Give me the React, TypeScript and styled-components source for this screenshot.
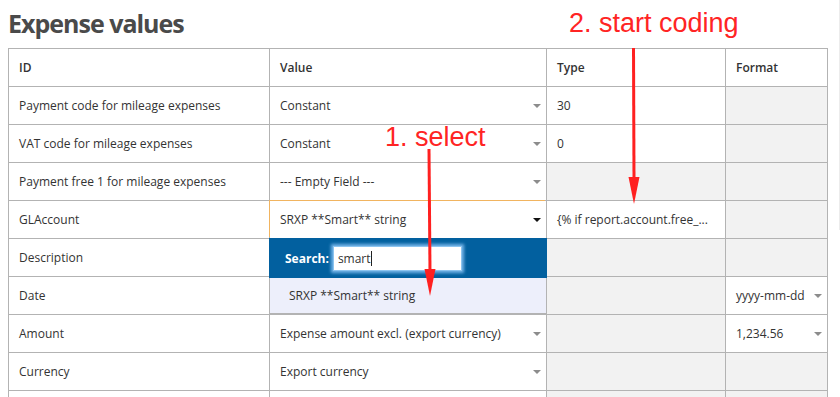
import React from 'react';
import styled, { createGlobalStyle } from 'styled-components';

const GlobalStyle = createGlobalStyle`
  html, body { margin: 0; padding: 0; background: #fff; }
  body { font-family: "Open Sans", "Liberation Sans", sans-serif; color: #333; overflow: hidden; }
`;

const Page = styled.div`
  position: relative;
  width: 840px;
  height: 397px;
  padding: 3px 0 0 8px;
  box-sizing: border-box;
  overflow: hidden;
  &::after {
    content: '';
    position: absolute;
    right: 0;
    top: 0;
    width: 1px;
    height: 230px;
    background: #ececec;
  }
`;

const Title = styled.h2`
  margin: 0 0 5px;
  font-size: 25px;
  font-weight: 700;
  letter-spacing: -1px;
  line-height: 40px;
  color: #4a4a4a;
`;

const TableWrap = styled.div`
  position: relative;
  width: max-content;
`;

const Grid = styled.div`
  display: grid;
  grid-template-columns: 260px 276px 178px 101px;
  grid-auto-rows: 37px;
  gap: 1px;
  background: #b3b3b3;
  border: 1px solid #b3b3b3;
  width: max-content;
`;

const Cell = styled.div<{ $muted?: boolean; $head?: boolean; $select?: boolean; $focus?: boolean }>`
  display: flex;
  align-items: center;
  justify-content: space-between;
  padding: 0 ${p => (p.$select ? '5px' : '10px')} 0 10px;
  background: ${p => (p.$muted ? '#f2f2f2' : '#fff')};
  font-size: 12px;
  font-weight: ${p => (p.$head ? 600 : 400)};
  color: #333;
  white-space: nowrap;
  overflow: hidden;
  box-shadow: ${p => (p.$focus ? '-1px -1px 0 0 #f1b460' : 'none')};
`;

const Caret = styled.span<{ $dark?: boolean }>`
  flex: none;
  width: 0;
  height: 0;
  border-left: 4px solid transparent;
  border-right: 4px solid transparent;
  border-top: 4px solid ${p => (p.$dark ? '#111' : '#8c8c8c')};
`;

const Dropdown = styled.div`
  position: absolute;
  left: 261px;
  top: 190px;
  width: 278px;
  z-index: 2;
`;

const SearchBar = styled.div`
  height: 40px;
  background: #02609f;
  display: flex;
  align-items: center;
  padding-left: 16px;
  gap: 4px;
`;

const SearchLabel = styled.span`
  color: #fff;
  font-size: 12px;
  font-weight: 700;
`;

const SearchBox = styled.div`
  width: 129px;
  height: 25px;
  box-sizing: border-box;
  background: #fff;
  border: 1px solid #8cc4ef;
  box-shadow: 0 0 3px 2px rgba(130, 190, 240, 0.9);
  display: flex;
  align-items: center;
  padding-left: 4px;
  font-size: 12px;
  color: #333;
`;

const TextCursor = styled.span`
  display: inline-block;
  width: 1px;
  height: 15px;
  background: #222;
`;

const Option = styled.div`
  height: 35px;
  background: #edeffb;
  border: 1px solid #b3b3b3;
  border-top: none;
  display: flex;
  align-items: center;
  padding-left: 19px;
  font-size: 12px;
  color: #333;
`;

const Note = styled.div<{ $x: number; $y: number }>`
  position: absolute;
  left: ${p => p.$x}px;
  top: ${p => p.$y}px;
  font-family: "Liberation Sans", Arial, sans-serif;
  font-size: 27px;
  line-height: 1;
  color: #ff2424;
  white-space: nowrap;
  z-index: 3;
`;

const Overlay = styled.svg`
  position: absolute;
  left: 0;
  top: 0;
  pointer-events: none;
  z-index: 4;
`;

type Row = {
  id: string;
  value?: string;
  select?: boolean;
  type?: string | null;
  format?: string | null;
  focus?: boolean;
};

const rows: Row[] = [
  { id: 'Payment code for mileage expenses', value: 'Constant', select: true, type: '30', format: null },
  { id: 'VAT code for mileage expenses', value: 'Constant', select: true, type: '0', format: null },
  { id: 'Payment free 1 for mileage expenses', value: '--- Empty Field ---', select: true, type: null, format: null },
  { id: 'GLAccount', value: 'SRXP **Smart** string', select: true, type: '{% if report.account.free_...', format: null, focus: true },
  { id: 'Description', value: 'Expense description', select: true, type: null, format: null },
  { id: 'Date', value: 'Expense date', select: true, type: null, format: 'yyyy-mm-dd' },
  { id: 'Amount', value: 'Expense amount excl. (export currency)', select: true, type: null, format: '1,234.56' },
  { id: 'Currency', value: 'Export currency', select: true, type: null, format: null },
  { id: 'Exchange rate', value: 'Export exchange rate', select: true, type: null, format: null },
];

export default function App() {
  return (
    <>
      <GlobalStyle />
      <Page>
        <Title>Expense values</Title>
        <TableWrap>
          <Grid>
            <Cell $head>ID</Cell>
            <Cell $head>Value</Cell>
            <Cell $head>Type</Cell>
            <Cell $head>Format</Cell>
            {rows.map(r => (
              <React.Fragment key={r.id}>
                <Cell>{r.id}</Cell>
                <Cell $select $focus={r.focus}>
                  <span>{r.value}</span>
                  <Caret $dark={r.focus} />
                </Cell>
                <Cell $muted={r.type == null}>{r.type}</Cell>
                <Cell $muted={r.format == null} $select={r.format != null}>
                  {r.format != null && (
                    <>
                      <span>{r.format}</span>
                      <Caret />
                    </>
                  )}
                </Cell>
              </React.Fragment>
            ))}
          </Grid>
          <Dropdown>
            <SearchBar>
              <SearchLabel>Search:</SearchLabel>
              <SearchBox>
                smart
                <TextCursor />
              </SearchBox>
            </SearchBar>
            <Option>SRXP **Smart** string</Option>
          </Dropdown>
        </TableWrap>
        <Note $x={569} $y={10}>2. start coding</Note>
        <Note $x={385} $y={124}>1. select</Note>
        <Overlay width={840} height={397} viewBox="0 0 840 397">
          <line x1={633.5} y1={48} x2={634} y2={180} stroke="#ff2020" strokeWidth={3} />
          <polygon points="628.5,177 639.5,177 634,204" fill="#ff2020" />
          <line x1={429} y1={149} x2={430} y2={272} stroke="#ff2020" strokeWidth={3} />
          <polygon points="424.5,269 435.5,269 430,296" fill="#ff2020" />
        </Overlay>
      </Page>
    </>
  );
}
